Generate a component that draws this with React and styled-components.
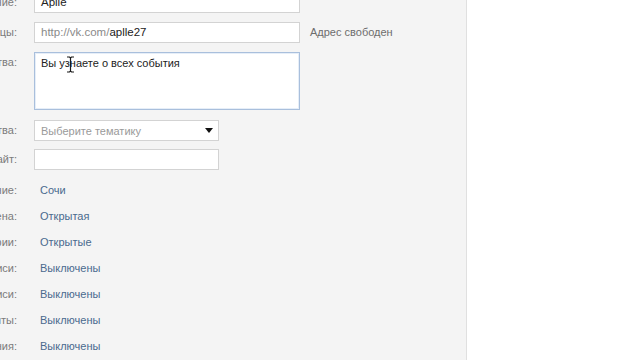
import React from "react";
import styled, { createGlobalStyle } from "styled-components";

const Global = createGlobalStyle`
  html, body { margin: 0; padding: 0; overflow: hidden; background: #ffffff; }
  body { font-family: "Liberation Sans", Arial, sans-serif; font-size: 11px; }
`;

const Page = styled.div`
  display: flex;
  width: 640px;
  height: 360px;
  overflow: hidden;
`;

const Main = styled.div`
  flex: 0 0 466px;
  background: #f4f4f4;
  border-right: 1px solid #e0e0e0;
  overflow: hidden;
`;

const Side = styled.div`
  flex: 1;
  background: #ffffff;
`;

const Form = styled.div`
  display: flex;
  flex-direction: column;
  margin-left: -126px;
  margin-top: -8px;
`;

const Row = styled.div`
  display: flex;
  align-items: flex-start;
  margin-bottom: ${(p) => p.$gap ?? 0}px;
`;

const Label = styled.div`
  flex: 0 0 160px;
  box-sizing: border-box;
  padding-right: 17px;
  text-align: right;
  color: #7b7b7b;
  white-space: nowrap;
  line-height: ${(p) => (p.$tall ? 26 : 21)}px;
`;

const Input = styled.div`
  box-sizing: border-box;
  width: ${(p) => p.$w}px;
  height: 21px;
  line-height: 19px;
  padding: 0 6px;
  font-size: 11.5px;
  background: #ffffff;
  border: 1px solid #d3d3d3;
  color: #222222;
  white-space: nowrap;
  overflow: hidden;
`;

const Muted = styled.span`
  color: #8a8a8a;
`;

const Hint = styled.div`
  margin-left: 10px;
  line-height: 21px;
  color: #6d6d6d;
`;

const TextArea = styled.div`
  position: relative;
  box-sizing: border-box;
  width: 266px;
  height: 58px;
  padding: 3px 6px;
  line-height: 14px;
  background: #ffffff;
  border: 1px solid #a9bfdc;
  box-shadow: inset 0 0 0 1px #e6eef8;
  color: #222222;
`;

const Cursor = styled.svg`
  position: absolute;
  left: 31px;
  top: 3px;
`;

const Select = styled.div`
  box-sizing: border-box;
  width: 185px;
  height: 21px;
  padding: 0 5px 0 6px;
  display: flex;
  align-items: center;
  justify-content: space-between;
  background: #ffffff;
  border: 1px solid #d3d3d3;
  color: #9a9a9a;
`;

const Arrow = styled.span`
  width: 0;
  height: 0;
  border-left: 4.5px solid transparent;
  border-right: 4.5px solid transparent;
  border-top: 5px solid #111111;
`;

const Value = styled.div`
  padding-left: 6px;
  line-height: 26px;
  color: #4a6a8e;
`;

const settings = [
  ["Местоположение:", "Сочи"],
  ["Стена:", "Открытая"],
  ["Фотографии:", "Открытые"],
  ["Видеозаписи:", "Выключены"],
  ["Аудиозаписи:", "Выключены"],
  ["Документы:", "Выключены"],
  ["Обсуждения:", "Выключены"],
];

export default function App() {
  return (
    <>
      <Global />
      <Page>
        <Main>
          <Form>
            <Row $gap={9}>
              <Label>Название:</Label>
              <Input $w={266}>Aplle</Input>
            </Row>
            <Row $gap={9}>
              <Label>Адрес страницы:</Label>
              <Input $w={266}>
                <Muted>http://vk.com/</Muted>aplle27
              </Input>
              <Hint>Адрес свободен</Hint>
            </Row>
            <Row $gap={10}>
              <Label>Описание сообщества:</Label>
              <TextArea>
                Вы узнаете о всех события
                <Cursor width="9" height="17" viewBox="0 0 9 17">
                  <path
                    d="M1 1h2.5L4.5 2 5.5 1H8M4.5 2v13M1 16h2.5l1-1 1 1H8"
                    fill="none"
                    stroke="#1a1a1a"
                    strokeWidth="1.2"
                  />
                </Cursor>
              </TextArea>
            </Row>
            <Row $gap={8}>
              <Label>Тематика сообщества:</Label>
              <Select>
                Выберите тематику
                <Arrow />
              </Select>
            </Row>
            <Row $gap={7}>
              <Label>Веб-сайт:</Label>
              <Input $w={185} />
            </Row>
            {settings.map(([label, value]) => (
              <Row key={label}>
                <Label $tall>{label}</Label>
                <Value>{value}</Value>
              </Row>
            ))}
          </Form>
        </Main>
        <Side />
      </Page>
    </>
  );
}
